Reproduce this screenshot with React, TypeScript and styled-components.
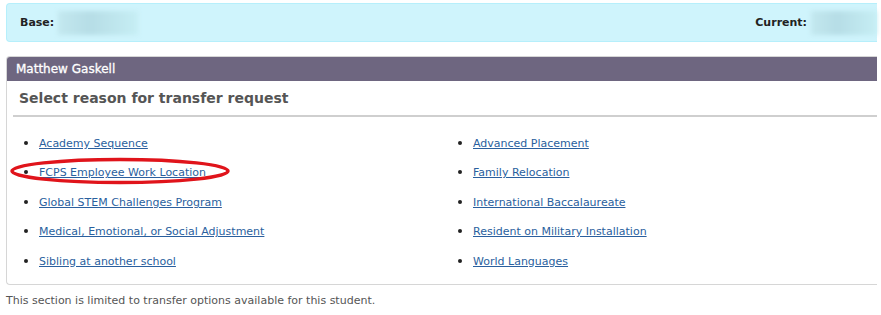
import styled, { createGlobalStyle } from "styled-components";

const GlobalStyle = createGlobalStyle`
  body {
    margin: 0;
    background: #ffffff;
    font-family: "DejaVu Sans", Verdana, sans-serif;
    overflow: hidden;
  }
`;

const Page = styled.div`
  width: 871px;
  padding: 3px 0 0 6px;
  display: flex;
  flex-direction: column;
`;

const InfoBar = styled.div`
  height: 37px;
  background: #cff4fc;
  border: 1px solid #b6effb;
  border-right: none;
  border-radius: 4px 0 0 4px;
  display: flex;
  align-items: center;
  justify-content: space-between;
  padding: 0 0 0 13px;
  font-size: 11px;
  font-weight: bold;
  color: #222;
`;

const Field = styled.div`
  display: flex;
  align-items: center;
  gap: 4px;
`;

const Blurred = styled.span<{ $w: number }>`
  display: inline-block;
  width: ${(p) => p.$w}px;
  height: 24px;
  background: linear-gradient(90deg, #c3e8ef 0%, #b6dde6 40%, #c6eef4 100%);
  filter: blur(2px);
`;

const Card = styled.div`
  margin-top: 14px;
  border: 1px solid #d6d6d6;
  border-right: none;
  border-radius: 4px 0 0 4px;
  overflow: hidden;
  height: 229px;
  box-sizing: border-box;
`;

const CardHeader = styled.div`
  height: 24px;
  background: #6e6680;
  color: #fff;
  font-size: 12px;
  font-weight: normal;
  -webkit-text-stroke: 0.3px #fff;
  display: flex;
  align-items: center;
  padding-left: 9px;
`;

const Title = styled.h2`
  margin: 0 0 0 6px;
  padding: 9px 0 9px 6px;
  font-size: 14px;
  font-weight: bold;
  color: #555;
  border-bottom: 2px solid #cfcfcf;
`;

const Reasons = styled.ul`
  list-style: disc;
  margin: 19px 0 0;
  padding: 0 0 0 32px;
  display: grid;
  grid-template-columns: 434px 1fr;
  grid-auto-flow: column;
  grid-template-rows: repeat(5, 29.4px);
  font-size: 11px;
  color: #222;
`;

const Reason = styled.li`
  position: relative;
  line-height: 14px;

  &::marker {
    font-size: 13px;
  }
`;

const ReasonLink = styled.a`
  color: #2a5f9e;
  text-decoration: underline;
`;

const Ring = styled.svg`
  position: absolute;
  left: -30px;
  top: -9px;
  pointer-events: none;
`;

const Note = styled.p`
  margin: 9px 0 0;
  font-size: 11px;
  color: #555;
`;

const reasons = [
  "Academy Sequence",
  "FCPS Employee Work Location",
  "Global STEM Challenges Program",
  "Medical, Emotional, or Social Adjustment",
  "Sibling at another school",
  "Advanced Placement",
  "Family Relocation",
  "International Baccalaureate",
  "Resident on Military Installation",
  "World Languages",
];

const App = () => {
  return (
    <>
      <GlobalStyle />
      <Page>
        <InfoBar>
          <Field>
            Base: <Blurred $w={80} />
          </Field>
          <Field>
            Current: <Blurred $w={66} />
          </Field>
        </InfoBar>
        <Card>
          <CardHeader>Matthew Gaskell</CardHeader>
          <Title>Select reason for transfer request</Title>
          <Reasons>
            {reasons.map((r, i) => (
              <Reason key={r}>
                <ReasonLink href="#">{r}</ReasonLink>
                {i === 1 && (
                  <Ring width="222" height="30" viewBox="0 0 222 30">
                    <ellipse cx="111" cy="15" rx="108" ry="11.5" fill="none" stroke="#e0141b" strokeWidth="3.5" />
                  </Ring>
                )}
              </Reason>
            ))}
          </Reasons>
        </Card>
        <Note>This section is limited to transfer options available for this student.</Note>
      </Page>
    </>
  );
};

export default App;
